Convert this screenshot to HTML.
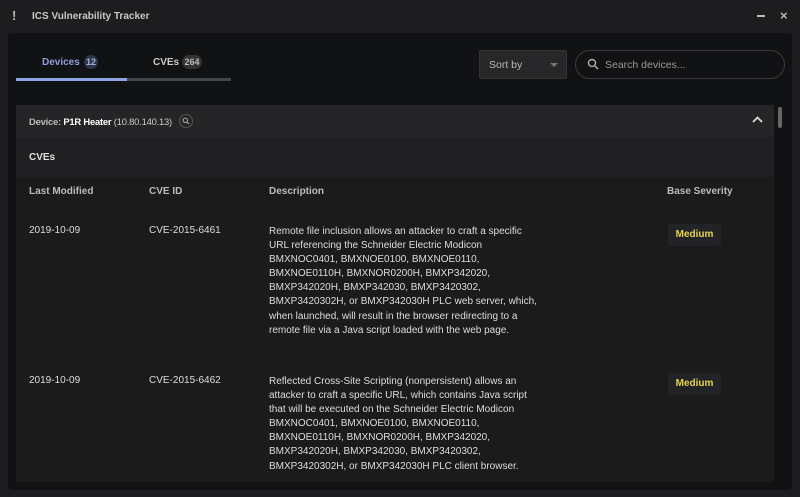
<!DOCTYPE html>
<html><head><style>
*{margin:0;padding:0;box-sizing:border-box}
body{width:800px;height:497px;background:#1d1d20;font-family:"Liberation Sans",sans-serif;color:#ddd;overflow:hidden;position:relative;font-size:10px}
.a{position:absolute}
.b{font-weight:bold}
</style></head><body>
<div class="a b" style="left:12px;top:8px;font-size:13px;color:#bbb">!</div>
<div class="a b" style="left:32px;top:11px;font-size:10px;color:#c8c8c8">ICS Vulnerability Tracker</div>
<div class="a" style="left:757px;top:15px;width:8px;height:2px;background:#bbb"></div>
<div class="a b" style="left:780px;top:8px;font-size:13px;color:#bbb">×</div>
<div class="a" style="left:8px;top:33px;width:784px;height:457px;background:#111213;border-radius:4px"></div>
<div class="a b" style="left:42px;top:57px;color:#8ca0d8">Devices</div>
<div class="a b" style="left:84px;top:55px;width:14px;height:14px;border-radius:7px;background:#2e3548;color:#9fb1e0;font-size:9px;text-align:center;line-height:14px">12</div>
<div class="a b" style="left:153px;top:57px;color:#ccc">CVEs</div>
<div class="a b" style="left:182px;top:55px;width:20px;height:14px;border-radius:7px;background:#333;color:#bbb;font-size:9px;text-align:center;line-height:14px">264</div>
<div class="a" style="left:16px;top:78px;width:215px;height:3px;background:#44464c"></div>
<div class="a" style="left:16px;top:78px;width:111px;height:3px;background:#8ca4e0"></div>
<div class="a" style="left:479px;top:50px;width:88px;height:29px;background:#27272a;border:1px solid #333;border-radius:2px"></div>
<div class="a" style="left:489px;top:59px;color:#bbb;font-size:10.5px">Sort by</div>
<div class="a" style="left:550px;top:63px;border:4px solid transparent;border-top:4px solid #777;border-bottom:0"></div>
<div class="a" style="left:575px;top:50px;width:210px;height:29px;border:1px solid #3a3a3c;border-radius:15px"></div>
<svg class="a" style="left:587px;top:58px" width="12" height="12" viewBox="0 0 12 12"><circle cx="5" cy="5" r="3.5" stroke="#aaa" stroke-width="1.5" fill="none"/><path d="M7.5 7.5L11 11" stroke="#aaa" stroke-width="1.5"/></svg>
<div class="a" style="left:605px;top:59px;color:#999;font-size:10.5px">Search devices...</div>
<div class="a" style="left:16px;top:105px;width:758px;height:377px;background:#1b1b1c"></div>
<div class="a" style="left:16px;top:105px;width:758px;height:32px;background:#252528"></div>
<div class="a" style="left:29px;top:116px;color:#ccc;font-size:9.4px;letter-spacing:-0.2px;white-space:nowrap"><span class="b" style="color:#bbb">Device: </span><span class="b" style="color:#fff">P1R Heater</span> (10.80.140.13)</div>
<div class="a" style="left:179px;top:114px;width:14px;height:14px;border:1px solid #555;border-radius:7px"></div>
<svg class="a" style="left:182px;top:117px" width="8" height="8" viewBox="0 0 8 8"><circle cx="3.3" cy="3.3" r="2.2" stroke="#aaa" fill="none"/><path d="M5 5L7 7" stroke="#aaa"/></svg>
<svg class="a" style="left:752px;top:116px" width="11" height="8" viewBox="0 0 11 8"><path d="M1 6L5.5 1.5L10 6" stroke="#ddd" stroke-width="1.8" fill="none"/></svg>
<div class="a" style="left:778px;top:107px;width:4px;height:21px;background:#666;border-radius:2px"></div>
<div class="a" style="left:16px;top:137px;width:758px;height:40px;background:#202022"></div>
<div class="a b" style="left:29px;top:152px;color:#e0e0e0">CVEs</div>
<div class="a b" style="left:29px;top:186px;color:#bbb">Last Modified</div>
<div class="a b" style="left:149px;top:186px;color:#bbb">CVE ID</div>
<div class="a b" style="left:269px;top:186px;color:#bbb">Description</div>
<div class="a b" style="left:667px;top:186px;color:#bbb">Base Severity</div>
<div class="a" style="left:29px;top:225px">2019-10-09</div>
<div class="a" style="left:149px;top:225px">CVE-2015-6461</div>
<div class="a" style="left:269px;top:225px;line-height:14.1px;width:280px">Remote file inclusion allows an attacker to craft a specific<br>URL referencing the Schneider Electric Modicon<br>BMXNOC0401, BMXNOE0100, BMXNOE0110,<br>BMXNOE0110H, BMXNOR0200H, BMXP342020,<br>BMXP342020H, BMXP342030, BMXP3420302,<br>BMXP3420302H, or BMXP342030H PLC web server, which,<br>when launched, will result in the browser redirecting to a<br>remote file via a Java script loaded with the web page.</div>
<div class="a b" style="left:668px;top:224px;width:53px;height:22px;background:#222326;border-radius:3px;color:#e8d44d;text-align:center;line-height:22px">Medium</div>
<div class="a" style="left:29px;top:375px">2019-10-09</div>
<div class="a" style="left:149px;top:375px">CVE-2015-6462</div>
<div class="a" style="left:269px;top:375px;line-height:14.1px;width:280px">Reflected Cross-Site Scripting (nonpersistent) allows an<br>attacker to craft a specific URL, which contains Java script<br>that will be executed on the Schneider Electric Modicon<br>BMXNOC0401, BMXNOE0100, BMXNOE0110,<br>BMXNOE0110H, BMXNOR0200H, BMXP342020,<br>BMXP342020H, BMXP342030, BMXP3420302,<br>BMXP3420302H, or BMXP342030H PLC client browser.</div>
<div class="a b" style="left:668px;top:373px;width:53px;height:22px;background:#222326;border-radius:3px;color:#e8d44d;text-align:center;line-height:22px">Medium</div>
</body></html>
